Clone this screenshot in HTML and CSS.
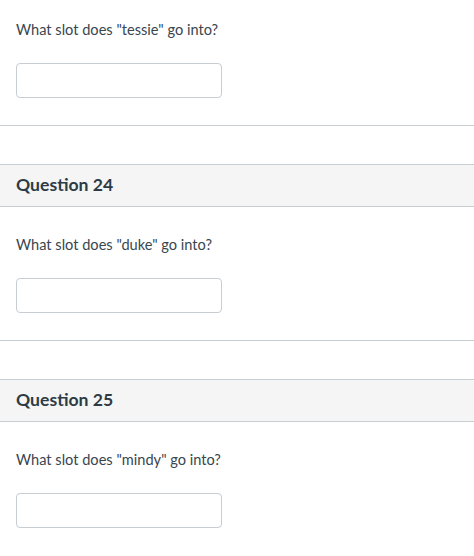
FILE: index.html
```html
<!DOCTYPE html>
<html lang="en">
<head>
<meta charset="utf-8">
<title>Quiz</title>
<link rel="stylesheet" href="styles.css">
</head>
<body>
<div class="quiz">
  <div class="question first">
    <div class="q-body">
      <p class="q-text">What slot does "tessie" go into?</p>
      <input class="q-input" type="text" aria-label="Answer">
    </div>
  </div>
  <hr class="divider">
  <div class="question">
    <div class="q-header"><h2 class="q-title">Question 24</h2></div>
    <div class="q-body">
      <p class="q-text">What slot does "duke" go into?</p>
      <input class="q-input" type="text" aria-label="Answer">
    </div>
  </div>
  <hr class="divider">
  <div class="question">
    <div class="q-header"><h2 class="q-title">Question 25</h2></div>
    <div class="q-body">
      <p class="q-text">What slot does "mindy" go into?</p>
      <input class="q-input" type="text" aria-label="Answer">
    </div>
  </div>
</div>
</body>
</html>
```
FILE: styles.css
```css
html, body {
  margin: 0;
  padding: 0;
  background: #ffffff;
}
body {
  font-family: Lato, "Liberation Sans", sans-serif;
  color: #2d3b45;
}
.quiz {
  display: flex;
  flex-direction: column;
}
.question {
  display: flex;
  flex-direction: column;
}
.q-header {
  background: #f5f5f5;
  border-top: 1px solid #c7cdd1;
  border-bottom: 1px solid #c7cdd1;
  padding: 8px 16px 9px;
}
.q-title {
  margin: 0;
  font-size: 17.6px;
  line-height: 24px;
  font-weight: 700;
  color: #2d3b45;
}
.q-body {
  padding: 28px 16px 27px;
  display: flex;
  flex-direction: column;
  align-items: flex-start;
}
.question.first .q-body {
  padding-top: 20px;
}
.q-text {
  margin: 0 0 23px;
  font-size: 14.6px;
  line-height: 20px;
  color: #394650;
}
.q-input {
  box-sizing: border-box;
  width: 206px;
  height: 35px;
  margin: 0;
  border: 1px solid #c7cdd1;
  border-radius: 4px;
  background: #ffffff;
  font-family: inherit;
  font-size: 14px;
  padding: 0 8px;
}
.divider {
  margin: 0 0 38px;
  border: 0;
  border-top: 1px solid #c7cdd1;
  height: 0;
}
```
